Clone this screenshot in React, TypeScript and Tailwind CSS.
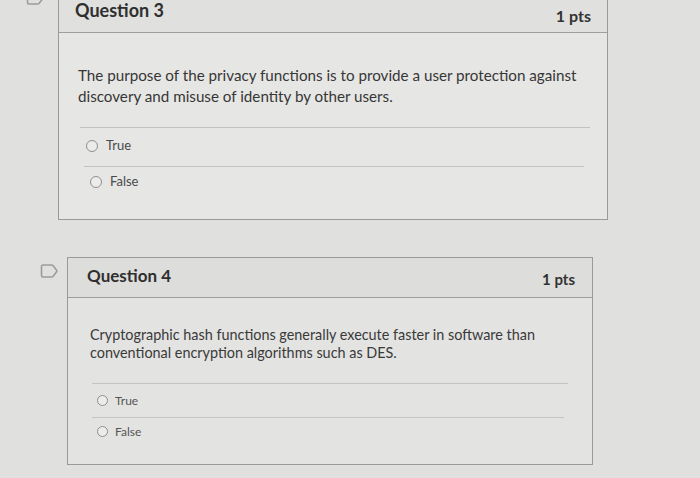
const Flag = ({ className }: { className: string }) => (
  <svg className={className} viewBox="0 0 18 14" fill="none">
    <path
      d="M1.5 2.5 Q1.5 1 3 1 H11.5 Q12.5 1 13.2 1.8 L16.6 6.2 Q17.2 7 16.6 7.8 L13.2 12.2 Q12.5 13 11.5 13 H3 Q1.5 13 1.5 11.5 Z"
      stroke="#9c9c9a"
      strokeWidth="1.6"
      strokeLinejoin="round"
    />
  </svg>
);

const Radio = ({ className }: { className: string }) => (
  <span className={`inline-block rounded-full border border-[#8e8e8c] bg-[#ececea] ${className}`} />
);

export default function App() {
  return (
    <div className="w-[700px] h-[478px] overflow-hidden bg-[#e0e0de] font-['Lato','Liberation_Sans',sans-serif]">
      {/* Question 3 */}
      <div className="flex items-start -mt-[8px]">
        <div className="w-[58px] shrink-0 pl-[26px] -mt-[1px]">
          <Flag className="w-[18px] h-[14px]" />
        </div>
        <div className="w-[550px] h-[228px] border border-[#9a9a98] bg-[#e6e6e4] flex flex-col">
          <div className="h-[40px] shrink-0 flex items-center justify-between pl-[16px] pr-[16px] bg-[#e0e0de] border-b border-[#9e9e9c]">
            <span className="text-[18px] font-bold text-[#2f2f2f] -mt-[5px]">Question 3</span>
            <span className="text-[16px] font-bold text-[#333] mt-[6px]">1 pts</span>
          </div>
          <div className="pt-[32px] px-[19px]">
            <p className="text-[15.2px] leading-[21px] text-[#363636] w-[515px]">
              The purpose of the privacy functions is to provide a user protection against discovery and misuse of identity by other users.
            </p>
            <div className="mt-[20px] border-t border-[#c2c2c0] mr-[-2px] ml-[2px]">
              <div className="h-[38px] flex items-center gap-[8px] pl-[6px] pb-[3px]">
                <Radio className="w-[12px] h-[12px]" />
                <span className="text-[13px] text-[#4a4a4a]">True</span>
              </div>
              <div className="h-[30px] flex items-center gap-[8px] pl-[6px] border-t border-[#c2c2c0] mr-[6px] ml-[4px]">
                <Radio className="w-[12px] h-[12px]" />
                <span className="text-[13px] text-[#4a4a4a]">False</span>
              </div>
            </div>
          </div>
        </div>
      </div>

      {/* Question 4 */}
      <div className="flex items-start mt-[37px]">
        <div className="w-[67px] shrink-0 pl-[40px] pt-[7px]">
          <Flag className="w-[18px] h-[14px]" />
        </div>
        <div className="w-[526px] h-[208px] border border-[#9a9a98] bg-[#e3e3e1] flex flex-col">
          <div className="h-[40px] shrink-0 flex items-center justify-between pl-[19px] pr-[17px] bg-[#dddddb] border-b border-[#9e9e9c]">
            <span className="text-[17px] font-bold text-[#2f2f2f] -mt-[3px]">Question 4</span>
            <span className="text-[15px] font-bold text-[#333] mt-[3px]">1 pts</span>
          </div>
          <div className="pt-[28px] px-[22px]">
            <p className="text-[14.4px] leading-[18px] text-[#3a3a3a]">
              Cryptographic hash functions generally execute faster in software than conventional encryption algorithms such as DES.
            </p>
            <div className="mt-[21px] border-t border-[#c4c4c2] ml-[2px] mr-[2px]">
              <div className="h-[33px] flex items-center gap-[7px] pl-[5px]">
                <Radio className="w-[11px] h-[11px]" />
                <span className="text-[12px] text-[#555]">True</span>
              </div>
              <div className="h-[28px] flex items-center gap-[7px] pl-[5px] border-t border-[#c4c4c2] mr-[4px]">
                <Radio className="w-[11px] h-[11px]" />
                <span className="text-[12px] text-[#555]">False</span>
              </div>
            </div>
          </div>
        </div>
      </div>
    </div>
  );
}
